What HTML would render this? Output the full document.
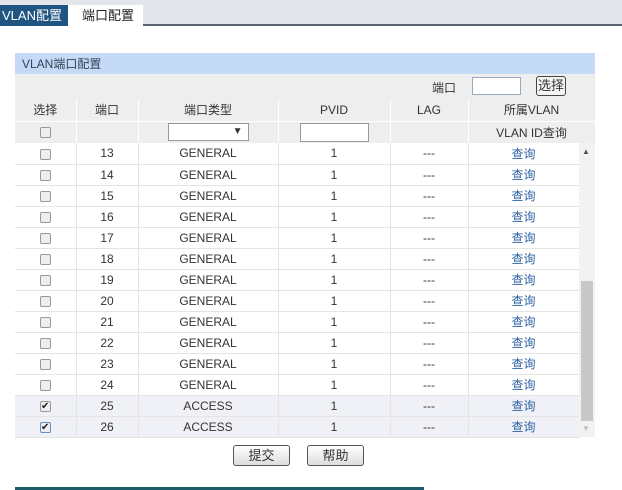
<!DOCTYPE html><html><head><meta charset="utf-8"><style>
*{margin:0;padding:0;box-sizing:border-box}
body{width:622px;height:490px;background:#fff;font-family:"Liberation Sans","Noto Sans CJK SC",sans-serif;font-size:12px;color:#333;position:relative;overflow:hidden}
.topbar{position:absolute;left:0;top:0;width:622px;height:26px;background:#e3e7ec;border-bottom:2px solid #5a6470}
.tab1{position:absolute;left:0;top:5px;width:68px;height:21px;background:#1f5580;color:#fff;font-size:13px;line-height:21px;padding-left:2px}
.tab2{position:absolute;left:68px;top:5px;width:75px;height:23px;background:#fff;color:#222;font-size:13px;line-height:21px;padding-left:14px}
.title{position:absolute;left:15px;top:53px;width:580px;height:21px;background:#c4daf6;color:#345;line-height:22px;padding-left:7px}
.prow{position:absolute;left:15px;top:74px;width:580px;height:25px;background:#eee}
table{position:absolute;left:15px;border-collapse:collapse;table-layout:fixed}
td{text-align:center;height:21px;border-right:1px solid #fff;border-bottom:1px solid #fff;padding:0}
.hd td{background:#eee;height:22px}
.dt td{border-right:1px solid #e4e4e4;border-bottom:1px solid #e4e4e4;background:#fff}
.dt tr.s td{background:#eff1f7}
.q{color:#2f63a4}
.cb{display:inline-block;width:11px;height:11px;border:1px solid #999;border-radius:2px;background:#eee;vertical-align:middle;font-size:10px;line-height:9px;color:#222}
.btn{position:absolute;top:445px;width:57px;height:21px;border:1px solid #555;border-radius:3px;background:linear-gradient(#fff,#ddd);text-align:center;line-height:19px;font-size:13px}
</style></head><body>
<div class="topbar"></div><div class="tab1">VLAN配置</div><div class="tab2">端口配置</div>
<div class="title">VLAN端口配置</div>
<div class="prow"><span style="position:absolute;left:417px;top:5px">端口</span><span style="position:absolute;left:457px;top:3px;width:49px;height:18px;border:1px solid #9ab;background:#fff"></span><span style="position:absolute;left:521px;top:2px;width:30px;height:20px;border:1px solid #444;border-radius:3px;background:#f4f4f4;text-align:center;line-height:18px;font-size:13px">选择</span></div>
<table class="hd" style="top:99px;width:580px"><colgroup><col width="61"><col width="62"><col width="140"><col width="112"><col width="78"><col width="127"></colgroup>
<tr><td>选择</td><td>端口</td><td>端口类型</td><td>PVID</td><td>LAG</td><td>所属VLAN</td></tr>
<tr><td><span class="cb"></span></td><td></td><td><span style="display:inline-block;width:81px;height:18px;border:1px solid #999;background:#fff;text-align:right;padding-right:5px;font-size:10px;line-height:16px">▼</span></td><td><span style="display:inline-block;width:69px;height:19px;border:1px solid #999;background:#fff;vertical-align:middle"></span></td><td></td><td>VLAN ID查询</td></tr></table>
<table class="dt" style="top:143px;width:564px"><colgroup><col width="61"><col width="62"><col width="140"><col width="112"><col width="78"><col width="111"></colgroup>
<tr><td><span class="cb"></span></td><td>13</td><td>GENERAL</td><td>1</td><td>---</td><td class="q">查询</td></tr>
<tr><td><span class="cb"></span></td><td>14</td><td>GENERAL</td><td>1</td><td>---</td><td class="q">查询</td></tr>
<tr><td><span class="cb"></span></td><td>15</td><td>GENERAL</td><td>1</td><td>---</td><td class="q">查询</td></tr>
<tr><td><span class="cb"></span></td><td>16</td><td>GENERAL</td><td>1</td><td>---</td><td class="q">查询</td></tr>
<tr><td><span class="cb"></span></td><td>17</td><td>GENERAL</td><td>1</td><td>---</td><td class="q">查询</td></tr>
<tr><td><span class="cb"></span></td><td>18</td><td>GENERAL</td><td>1</td><td>---</td><td class="q">查询</td></tr>
<tr><td><span class="cb"></span></td><td>19</td><td>GENERAL</td><td>1</td><td>---</td><td class="q">查询</td></tr>
<tr><td><span class="cb"></span></td><td>20</td><td>GENERAL</td><td>1</td><td>---</td><td class="q">查询</td></tr>
<tr><td><span class="cb"></span></td><td>21</td><td>GENERAL</td><td>1</td><td>---</td><td class="q">查询</td></tr>
<tr><td><span class="cb"></span></td><td>22</td><td>GENERAL</td><td>1</td><td>---</td><td class="q">查询</td></tr>
<tr><td><span class="cb"></span></td><td>23</td><td>GENERAL</td><td>1</td><td>---</td><td class="q">查询</td></tr>
<tr><td><span class="cb"></span></td><td>24</td><td>GENERAL</td><td>1</td><td>---</td><td class="q">查询</td></tr>
<tr class="s"><td><span class="cb">✔</span></td><td>25</td><td>ACCESS</td><td>1</td><td>---</td><td class="q">查询</td></tr>
<tr class="s"><td><span class="cb" style="border-color:#6a8ec0">✔</span></td><td>26</td><td>ACCESS</td><td>1</td><td>---</td><td class="q">查询</td></tr>
</table>
<div style="position:absolute;left:579px;top:143px;width:16px;height:294px;background:#f2f2f2"></div>
<div style="position:absolute;left:581px;top:281px;width:12px;height:140px;background:#c8c8c8"></div>
<div style="position:absolute;left:582px;top:147px;font-size:8px;color:#555">▲</div>
<div style="position:absolute;left:582px;top:424px;font-size:8px;color:#bbb">▼</div>
<div class="btn" style="left:233px">提交</div><div class="btn" style="left:307px">帮助</div>
<div style="position:absolute;left:15px;top:487px;width:409px;height:3px;background:#1e5a6a"></div>
</body></html>
